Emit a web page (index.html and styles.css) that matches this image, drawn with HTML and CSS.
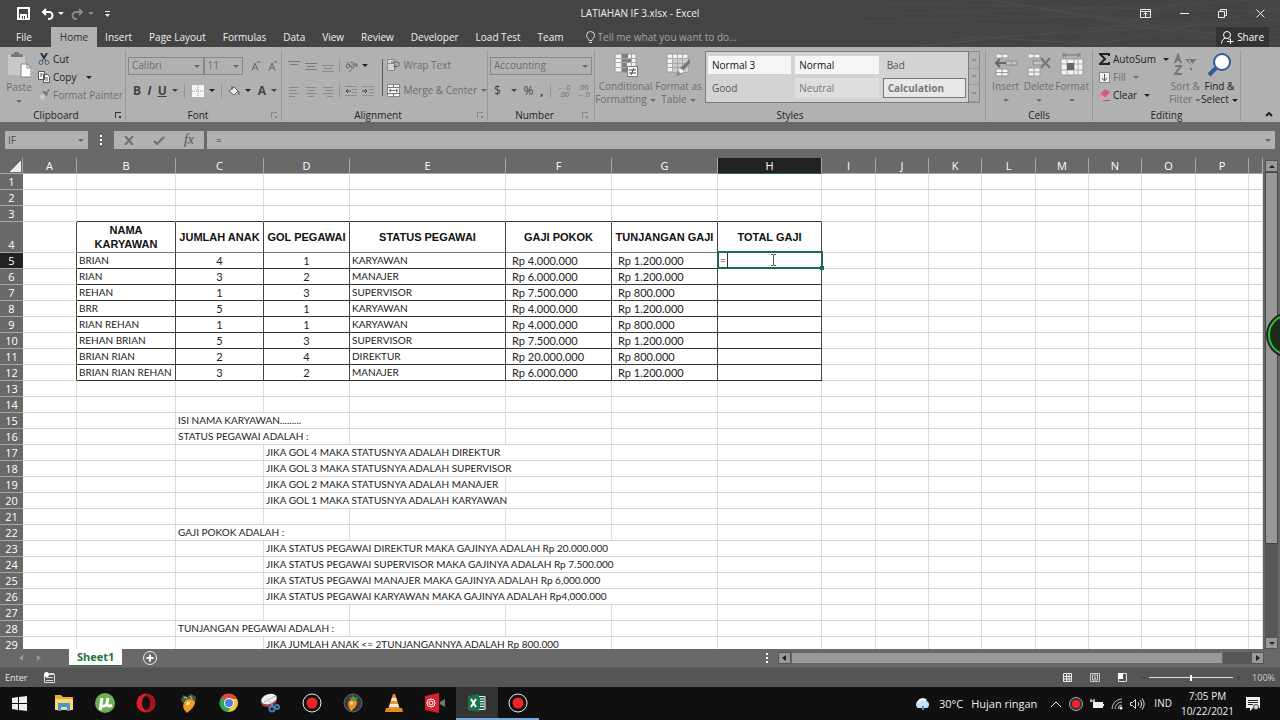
FILE: index.html
```html
<!DOCTYPE html>
<html lang="id">
<head>
    <meta charset="UTF-8">
    <meta name="viewport" content="width=device-width, initial-scale=1.0">
    <title>LATIAHAN IF 3.xlsx - Excel</title>
    <link rel="stylesheet" href="styles.css">
</head>
<body>
    <header class="window-top">
        <svg class="texture" viewBox="0 0 420 47" preserveAspectRatio="none" aria-hidden="true">
            <path d="M20 3 L420 12 M40 14 L300 6 L420 -2 M0 22 L220 16 L420 30 M90 40 L420 20 M130 0 L420 44 M60 46 L260 26 L420 38 M200 47 L330 0 M100 36 L240 44 L420 8 M180 8 L400 47"/>
        </svg>
        <div class="titlebar">
            <div class="quick-access">
                <button aria-label="Save"><svg width="13" height="13" viewBox="0 0 13 13"><path d="M1 1h11v11H1z" fill="none" stroke="#fff" stroke-width="2"/><path d="M3 7h7v5H3z" fill="#fff"/><path d="M5 9h1v3H5zM7 9h1v3H7z" fill="#444"/></svg></button>
                <button aria-label="Undo" class="undo"><svg width="13" height="12" viewBox="0 0 13 12"><path d="M2 4h6a3.500 3.500 0 0 1 0 7H7M5 1L2 4l3 3" fill="none" stroke="#fff" stroke-width="2"/></svg><i class="arrow"></i></button>
                <button aria-label="Redo" class="redo"><svg width="13" height="12" viewBox="0 0 13 12"><path d="M11 4H5a3.500 3.500 0 0 0 0 7h1M8 1l3 3-3 3" fill="none" stroke="#888" stroke-width="2"/></svg><i class="arrow"></i></button>
                <button aria-label="Customize" class="customize"><svg width="5" height="6" viewBox="0 0 5 6"><path d="M0 .5h5" stroke="#eee"/><path d="M0 3h5L2.500 6z" fill="#eee"/></svg></button>
            </div>
            <h1>LATIAHAN IF 3.xlsx - Excel</h1>
            <div class="window-buttons">
                <button aria-label="Ribbon display"><svg width="11" height="9" viewBox="0 0 11 9"><path d="M.5.5h10v8H.5zM.5 2.500h10M5.500 8V4M3.500 5.500l2-2 2 2" fill="none" stroke="#eee"/></svg></button>
                <button aria-label="Minimize"><svg width="9" height="9" viewBox="0 0 9 9"><path d="M0 4.500h9" stroke="#eee"/></svg></button>
                <button aria-label="Restore"><svg width="9" height="9" viewBox="0 0 9 9"><path d="M.5 2.500h6v6h-6zM2.500 2V.5h6v6H7" fill="none" stroke="#eee"/></svg></button>
                <button aria-label="Close"><svg width="9" height="9" viewBox="0 0 9 9"><path d="M.5.5l8 8M8.500.5l-8 8" stroke="#eee"/></svg></button>
            </div>
        </div>
        <nav class="tabs">
            <a href="#" class="file">File</a>
            <a href="#" class="current">Home</a>
            <a href="#">Insert</a>
            <a href="#">Page Layout</a>
            <a href="#">Formulas</a>
            <a href="#">Data</a>
            <a href="#">View</a>
            <a href="#">Review</a>
            <a href="#">Developer</a>
            <a href="#">Load Test</a>
            <a href="#">Team</a>
            <label class="tell-me">
                <svg width="9" height="13" viewBox="0 0 9 13"><path d="M3 9.500c0-2-2.500-2.500-2.500-5a4 4 0 0 1 8 0c0 2.500-2.500 3-2.500 5zM3 11.500h3" fill="none" stroke="#ddd"/></svg>
                <input type="text" aria-label="Tell me" placeholder="Tell me what you want to do...">
            </label>
            <button class="share"><svg width="13" height="13" viewBox="0 0 13 13"><circle cx="6" cy="4" r="3.500" fill="none" stroke="#fff"/><path d="M.5 12.500c0-3 2-5 4-5.500M7 7.500l1.500 1M6 10.500h6.500M9.500 7.500v5.500" fill="none" stroke="#fff"/></svg>Share</button>
        </nav>
    </header>

    <section class="ribbon">
        <div class="group clipboard launches">
            <div class="tools">
                <button class="big paste off">
                    <svg width="24" height="26" viewBox="0 0 24 26"><path d="M1 3h17v20H1z" fill="#c9c9c9"/><path d="M4 2h3V0h5v2h4v3H4z" fill="#777"/><path d="M14 12h6l4 4v9H14z" fill="#fff" stroke="#888"/><path d="M20 12v4h4" fill="none" stroke="#888"/></svg>
                    Paste<i class="arrow"></i>
                </button>
                <div class="stack">
                    <button><svg width="12" height="12" viewBox="0 0 12 12"><path d="M3 0l5 8M9 0L4 8" stroke="#333"/><path d="M3 0l3 5M9 0L6 5" stroke="#333" stroke-width="2"/><circle cx="3" cy="9.500" r="2" fill="none" stroke="#40668c"/><circle cx="9" cy="9.500" r="2" fill="none" stroke="#40668c"/></svg>Cut</button>
                    <button><svg width="12" height="12" viewBox="0 0 12 12"><path d="M.5.5h6v8h-6zM5.500 3.500h4l2 2v6h-6z" fill="#fff" stroke="#555"/><path d="M2 3h3M2 5h2M7 7h3M7 9h3" stroke="#555"/></svg>Copy<i class="arrow spaced"></i></button>
                    <button class="off"><svg width="12" height="12" viewBox="0 0 12 12"><path d="M1 7l4-2 2 3-2 4z" fill="#ccc"/><path d="M4 3l5 4 1-2-1-1 3-3-1-1-3 3-2-1z" fill="#777"/></svg>Format Painter</button>
                </div>
            </div>
            <div class="caption">Clipboard<i class="launcher dark"></i></div>
        </div>

        <div class="group font launches">
            <div class="tools two-rows">
                <div class="line">
                    <span class="drop font-name"><select aria-label="Font"><option>Calibri</option></select></span><span class="drop font-size"><select aria-label="Font size"><option>11</option></select></span>
                    <button class="grow" aria-label="Increase font size"><svg width="10" height="11" viewBox="0 0 10 11"><path d="M1 10.500L4 3l3 7.500M2 8h4" fill="none" stroke="#666"/><path d="M6 3l1.500-2L9 3" fill="none" stroke="#666"/></svg></button>
                    <button class="shrink" aria-label="Decrease font size"><svg width="10" height="11" viewBox="0 0 10 11"><path d="M1 10.500L4 3l3 7.500M2 8h4" fill="none" stroke="#666"/><path d="M6 1l1.500 2L9 1" fill="none" stroke="#666"/></svg></button>
                </div>
                <div class="line marks">
                    <button class="letter"><b>B</b></button>
                    <button class="letter"><b><em>I</em></b></button>
                    <button class="letter"><b><u>U</u></b><i class="arrow"></i></button>
                    <i class="rule"></i>
                    <button aria-label="Borders"><svg width="12" height="12" viewBox="0 0 12 12"><path d="M0 0h12v12H0z" fill="#f5f5f5"/><path d="M0 6h12M6 0v12" stroke="#999" stroke-dasharray="1 1"/></svg><i class="arrow"></i></button>
                    <i class="rule"></i>
                    <button aria-label="Fill color"><svg width="12" height="12" viewBox="0 0 12 12"><path d="M1 6l5-4 4 4-4 4z" fill="#eee" stroke="#666"/><path d="M4 5V1M9 5l2 2v3" fill="none" stroke="#555"/></svg><i class="arrow"></i></button>
                    <button class="letter"><b>A</b><i class="arrow"></i></button>
                </div>
            </div>
            <div class="caption">Font<i class="launcher"></i></div>
        </div>

        <div class="group alignment launches">
            <div class="tools">
                <div class="two-rows">
                    <div class="line">
                        <button aria-label="Top align"><svg width="12" height="12" viewBox="0 0 12 12"><path d="M0 1.500h12M2 4.500h8" stroke="#777"/></svg></button>
                        <button aria-label="Middle align"><svg width="12" height="12" viewBox="0 0 12 12"><path d="M0 3.500h12M2 6.500h8M0 9.500h12" stroke="#777"/></svg></button>
                        <button aria-label="Bottom align"><svg width="12" height="12" viewBox="0 0 12 12"><path d="M0 5.500h12M2 8.500h8M0 11.500h12" stroke="#8a8a8a"/></svg></button>
                        <i class="rule"></i>
                        <button aria-label="Orientation"><svg width="13" height="12" viewBox="0 0 13 12"><circle cx="3" cy="6" r="2" fill="none" stroke="#666"/><path d="M2 2l5 6M5 3a2 2 0 1 1 1 3M4 12l8-8M12 7V4H9" fill="none" stroke="#666"/></svg><i class="arrow"></i></button>
                    </div>
                    <div class="line">
                        <button aria-label="Align left"><svg width="12" height="12" viewBox="0 0 12 12"><path d="M1 2.500h10M1 5.500h7M1 8.500h10M1 11.500h6" stroke="#8a8a8a"/></svg></button>
                        <button aria-label="Center"><svg width="12" height="12" viewBox="0 0 12 12"><path d="M1 2.500h10M3 5.500h6M1 8.500h10M3 11.500h6" stroke="#8a8a8a"/></svg></button>
                        <button aria-label="Align right"><svg width="12" height="12" viewBox="0 0 12 12"><path d="M1 2.500h10M4 5.500h7M1 8.500h10M5 11.500h6" stroke="#8a8a8a"/></svg></button>
                        <i class="rule"></i>
                        <button aria-label="Decrease indent"><svg width="12" height="12" viewBox="0 0 12 12"><path d="M0 1.500h12M7 4.500h5M7 7.500h5M0 10.500h12" stroke="#8f8f8f"/><path d="M6 6H1M3 4L1 6l2 2" fill="none" stroke="#444"/></svg></button>
                        <button aria-label="Increase indent"><svg width="12" height="12" viewBox="0 0 12 12"><path d="M0 1.500h12M7 4.500h5M7 7.500h5M0 10.500h12" stroke="#8f8f8f"/><path d="M0 6h5M3 4l2 2-2 2" fill="none" stroke="#444"/></svg></button>
                    </div>
                </div>
                <i class="rule tall"></i>
                <div class="two-rows">
                    <div class="line"><button class="off"><svg width="13" height="13" viewBox="0 0 13 13"><path d="M.5.5h7v11h-7zM.5 4.500h7" fill="#d5d5d5" stroke="#888"/><path d="M4 3h6a2 2 0 0 1 0 4.500H7M9 5.500l-2 2 2 2" fill="none" stroke="#666"/></svg>Wrap Text</button></div>
                    <div class="line"><button class="off"><svg width="13" height="13" viewBox="0 0 13 13"><path d="M.5.500h12v12H.5z" fill="#f5f5f5" stroke="#888"/><path d="M0 3.500h13M0 9.500h13M6.500 0v3M6.500 10v3M2 6.500h9M4 5L2 6.500 4 8M9 5l2 1.500L9 8" fill="none" stroke="#777"/></svg>Merge &amp; Center<i class="arrow"></i></button></div>
                </div>
            </div>
            <div class="caption">Alignment<i class="launcher"></i></div>
        </div>

        <div class="group number launches">
            <div class="tools two-rows">
                <div class="line"><span class="drop format"><select aria-label="Number format"><option>Accounting</option></select></span></div>
                <div class="line">
                    <button class="letter sign">$<i class="arrow spaced"></i></button>
                    <button class="letter sign">%</button>
                    <button class="letter sign"><b>,</b></button>
                    <i class="rule"></i>
                    <button class="decimals off">←.0<br>.00</button>
                    <button class="decimals off">.00<br>→.0</button>
                </div>
            </div>
            <div class="caption">Number<i class="launcher"></i></div>
        </div>

        <div class="group styles">
            <div class="tools">
                <button class="big off">
                    <svg width="24" height="24" viewBox="0 0 24 24"><path d="M1 1h21v18H1z" fill="#f3f3f3" stroke="#999"/><path d="M8 1h6v4H8zM8 5h9v4H8zM8 9h5v5H8zM8 14h7v5H8z" fill="#808080"/><path d="M1 5.500h21M1 9.500h21M1 14.500h21M7.500 1v18M17.500 1v18" stroke="#aaa"/><path d="M13.500 13.500h10v10h-10z" fill="#fff" stroke="#777"/><path d="M15 17h7M15 20h7M20 15l-3 7" stroke="#444"/></svg>
                    <span>Conditional<br>Formatting<i class="arrow"></i></span>
                </button>
                <button class="big off">
                    <svg width="25" height="24" viewBox="0 0 25 24"><path d="M1 1h21v18H1z" fill="#f3f3f3" stroke="#999"/><path d="M6 5h16v14H6z" fill="#ccc"/><path d="M1 5.500h21M1 10.500h21M1 14.500h21M6.500 1v18M11.500 1v18M16.500 1v18" stroke="#aaa"/><path d="M24 6v4l-7 8-3-3z" fill="#777"/><path d="M8 23c4 0 3-6 6-6 4 0 3 6-6 6z" fill="#888"/><circle cx="15" cy="18" r="2" fill="#fff"/></svg>
                    <span>Format as<br>Table<i class="arrow"></i></span>
                </button>
                <div class="gallery">
                    <button class="white">Normal 3</button>
                    <button class="white">Normal</button>
                    <button class="bad">Bad</button>
                    <button class="good">Good</button>
                    <button class="neutral">Neutral</button>
                    <button class="calc">Calculation</button>
                </div>
                <div class="gallery-scroll">
                    <button aria-label="Row up"><i class="arrow up"></i></button>
                    <button aria-label="Row down"><i class="arrow"></i></button>
                    <button aria-label="More"><i class="arrow"></i></button>
                </div>
            </div>
            <div class="caption">Styles</div>
        </div>

        <div class="group cells">
            <div class="tools">
                <button class="big off"><svg width="24" height="24" viewBox="0 0 24 24"><path d="M2 1h12v4H2zM2 16h12v7H2z" fill="#f3f3f3" stroke="#999"/><path d="M12 8h11v4H12z" fill="#c5c5c5" stroke="#888"/><path d="M8 1v4M8 16v7M2 19.500h12M17.500 8v4" stroke="#999"/><path d="M12 10H2M6 6l-4 4 4 4" fill="none" stroke="#666" stroke-width="2"/></svg>Insert<i class="arrow"></i></button>
                <button class="big off"><svg width="24" height="24" viewBox="0 0 24 24"><path d="M1 1h12v4H1zM1 15h12v8H1z" fill="#f3f3f3" stroke="#999"/><path d="M6 8h10v4H6z" fill="#c5c5c5" stroke="#888"/><path d="M7 1v4M7 15v8M1 19h12" stroke="#999"/><path d="M14 5l9 10M23 5l-9 10" stroke="#777" stroke-width="2"/></svg>Delete<i class="arrow"></i></button>
                <button class="big off"><svg width="24" height="24" viewBox="0 0 24 24"><path d="M1 6h22v16H1z" fill="#f3f3f3" stroke="#999"/><path d="M1 11h22M1 17h22M7 6v18M14 6v16M18 6v16" stroke="#aaa"/><path d="M7 10h7v7H7z" fill="#666"/><path d="M3 2h17M3 0v4M20 0v4M6 0L4 2l2 2M17 0l2 2-2 2" fill="none" stroke="#777"/></svg>Format<i class="arrow"></i></button>
            </div>
            <div class="caption">Cells</div>
        </div>

        <div class="group editing">
            <div class="tools">
                <div class="stack">
                    <button><svg width="11" height="12" viewBox="0 0 11 12"><path d="M10 3V1H1l5 5-5 5h9V9" fill="none" stroke="#222" stroke-width="2"/></svg>AutoSum<i class="arrow"></i></button>
                    <button class="off"><svg width="11" height="11" viewBox="0 0 11 11"><path d="M.5.500h10v10H.5z" fill="#eee" stroke="#888"/><path d="M5.500 2v7M3 6l2.500 3L8 6" fill="none" stroke="#555"/></svg>Fill<i class="arrow"></i></button>
                    <button><svg width="11" height="12" viewBox="0 0 11 12"><path d="M0 7l6-7 5 3-6 7H2z" fill="#d35b77"/><path d="M2 5l5 4-2 2H2L0 8z" fill="#e99bad"/><path d="M4 11.500h7" stroke="#777"/></svg>Clear<i class="arrow"></i></button>
                </div>
                <button class="big off"><svg width="24" height="24" viewBox="0 0 24 24"><path d="M2 10l3-8 3 8M3 7h4M2 13h6l-6 8h7" fill="none" stroke="#777" stroke-width="2"/><path d="M12 6h12l-5 5v7l-2-2v-5z" fill="#777"/><path d="M16 7l2 3v5" fill="none" stroke="#ddd"/></svg><span>Sort &amp;<br>Filter<i class="arrow"></i></span></button>
                <button class="big"><svg width="24" height="24" viewBox="0 0 24 24"><path d="M2 22l7-7" stroke="#2e5c92" stroke-width="4"/><circle cx="15" cy="9" r="8" fill="#fff" stroke="#2e5c92" stroke-width="2"/></svg><span>Find &amp;<br>Select<i class="arrow"></i></span></button>
            </div>
            <div class="caption">Editing</div>
        </div>
        <button class="collapse" aria-label="Collapse the ribbon"><svg width="8" height="5" viewBox="0 0 8 5"><path d="M1 4l3-3 3 3" fill="none" stroke="#222" stroke-width="2"/></svg></button>
    </section>

    <section class="formula-row">
        <span class="drop name-box"><input type="text" aria-label="Name box" value="IF"></span>
        <i class="dots"></i>
        <div class="formula-buttons">
            <button aria-label="Cancel"><svg width="10" height="9" viewBox="0 0 10 9"><path d="M1 0l8 9M9 0L1 9" stroke="#707070" stroke-width="2"/></svg></button>
            <button aria-label="Enter"><svg width="12" height="9" viewBox="0 0 12 9"><path d="M1 5l3 3 7-7" fill="none" stroke="#707070" stroke-width="2"/></svg></button>
            <button class="fx" aria-label="Insert function">fx</button>
        </div>
        <span class="drop formula"><input type="text" aria-label="Formula bar" value="="></span>
    </section>

    <main class="workbook">
        <div class="sheet">
            <table>
                <colgroup>
                    <col class="w-head"><col class="w54"><col class="w-b"><col class="w-c"><col class="w-d"><col class="w-e"><col class="w-f"><col class="w-f"><col class="w-h">
                    <col class="w54"><col class="w53"><col class="w53"><col class="w54"><col class="w53"><col class="w53"><col class="w54"><col class="w53"><col>
                </colgroup>
                <thead>
                    <tr><th class="corner"></th><th>A</th><th>B</th><th>C</th><th>D</th><th>E</th><th>F</th><th>G</th><th class="picked">H</th><th>I</th><th>J</th><th>K</th><th>L</th><th>M</th><th>N</th><th>O</th><th>P</th><th></th></tr>
                </thead>
                <tbody id="rows"></tbody>
            </table>
        </div>
        <div class="vscroll">
            <button aria-label="Scroll up"><i class="arrow up"></i></button>
            <div class="track"><div class="thumb"></div></div>
            <button aria-label="Scroll down"><i class="arrow"></i></button>
        </div>
    </main>

    <section class="sheet-bar">
        <button class="step" aria-label="Previous sheet"><i class="arrow left"></i></button>
        <button class="step" aria-label="Next sheet"><i class="arrow right"></i></button>
        <a href="#" class="sheet-tab">Sheet1</a>
        <button class="add" aria-label="New sheet"><svg width="14" height="14" viewBox="0 0 14 14"><circle cx="7" cy="7" r="6.500" fill="none" stroke="#eee"/><path d="M7 3.500v7M3.500 7h7" stroke="#fff" stroke-width="2"/></svg></button>
        <i class="dots"></i>
        <div class="hscroll">
            <button aria-label="Scroll left"><i class="arrow left"></i></button>
            <div class="track"><div class="thumb"></div></div>
            <button aria-label="Scroll right"><i class="arrow right"></i></button>
        </div>
    </section>

    <footer class="status">
        <span>Enter</span>
        <svg width="11" height="11" viewBox="0 0 11 11"><path d="M.5 2.500h10v8H.5zM2 5.500h7M2 8.500h7M5 1.500h5" fill="none" stroke="#ddd"/><circle cx="2.500" cy="2.500" r="2.500" fill="#fff"/></svg>
        <div class="views">
            <button aria-label="Normal view"><svg width="9" height="9" viewBox="0 0 9 9"><path d="M.5.500h8v8h-8zM3.500 0v9M6 0v9M0 3.500h9M0 6h9" fill="none" stroke="#eee"/></svg></button>
            <button aria-label="Page layout"><svg width="10" height="9" viewBox="0 0 10 9"><path d="M.5.500h9v8h-9zM2.500 2h5v5h-5zM4 4h2M4 5.500h2" fill="none" stroke="#ccc"/></svg></button>
            <button aria-label="Page break"><svg width="9" height="9" viewBox="0 0 9 9"><path d="M.5.500h8v8h-8z" fill="none" stroke="#ddd"/><path d="M0 0h5v6H0z" fill="#fff"/></svg></button>
        </div>
        <label class="zoom"><span>−</span><input type="range" aria-label="Zoom" min="0" max="200" value="100"><span>+</span></label>
        <span class="percent">100%</span>
    </footer>

    <nav class="taskbar">
        <button class="start" aria-label="Start"><svg width="15" height="15" viewBox="0 0 15 15"><path d="M0 2l6-1v6H0zM7 1l8-1v7H7zM0 8h6v6l-6-1zM7 8h8v7l-8-1z" fill="#eee"/></svg></button>
        <div class="apps">
            <button aria-label="File Explorer"><svg width="20" height="18" viewBox="0 0 20 18"><path d="M1 1h6l2 2h10v13H1z" fill="#e5ae40"/><path d="M1 5h18v11H1z" fill="#f9d774"/><path d="M4 17V9h12v8h-3v-4H7v4z" fill="#4a95ca"/></svg></button>
            <button aria-label="uTorrent"><svg width="20" height="20" viewBox="0 0 20 20"><circle cx="10" cy="10" r="10" fill="#6fae55"/><path d="M7 5l-2 12M6 11c0 3 5 3 6-1l1-5M12 10c0 3 2 4 5 2" fill="none" stroke="#fff" stroke-width="3"/></svg></button>
            <button aria-label="Opera"><svg width="20" height="20" viewBox="0 0 20 20"><circle cx="10" cy="10" r="9.500" fill="#d81f2a"/><path d="M10 1a9 9 0 0 1 0 18" fill="#a90f20"/><ellipse cx="10" cy="10" rx="4" ry="7" fill="#101010"/></svg></button>
            <button aria-label="FL Studio"><svg width="18" height="20" viewBox="0 0 18 20"><path d="M2 7l2-5 4 2 4-3 5 3-1 5-6 2-6-1z" fill="#4b5e45"/><path d="M5 4l3 1M11 3l2 3" stroke="#c5d4b5"/><path d="M5 10c2-5 8-5 11-1 0 4-4 8-8 11-3-3-5-6-3-10z" fill="#f39b24"/><path d="M7 11c1-3 4-3 4-1s-3 4-4 1z" fill="#ffe2a0"/></svg></button>
            <button aria-label="Chrome"><svg width="20" height="20" viewBox="0 0 20 20"><circle cx="10" cy="10" r="9" fill="#f3c737"/><path d="M10 10L2 5a9 9 0 0 1 16 1h-8z" fill="#dc4b3e"/><path d="M10 10L2 5a9 9 0 0 0 7 14l4-7z" fill="#38a05a"/><circle cx="10" cy="10" r="5" fill="#fff"/><circle cx="10" cy="10" r="4" fill="#4a83d9"/></svg></button>
            <button aria-label="Snipping Tool"><svg width="20" height="20" viewBox="0 0 20 20"><ellipse cx="9" cy="8" rx="8" ry="6" fill="#a33c4c" transform="rotate(-18 9 8)"/><ellipse cx="9" cy="6" rx="8" ry="5" fill="#eee" transform="rotate(-18 9 6)"/><path d="M4 9l12-6M9 8l4 5" stroke="#aaa"/><circle cx="12" cy="16" r="2.500" fill="none" stroke="#3d83b5" stroke-width="2"/><circle cx="17" cy="14" r="2" fill="none" stroke="#3d83b5" stroke-width="2"/></svg></button>
            <button aria-label="Recorder"><svg width="20" height="20" viewBox="0 0 20 20"><circle cx="10" cy="10" r="9" fill="#111" stroke="#eee"/><circle cx="10" cy="10" r="5.500" fill="#ee2525"/></svg></button>
            <button aria-label="FL Studio 2"><svg width="20" height="20" viewBox="0 0 20 20"><circle cx="10" cy="10" r="9" fill="#363b3b" stroke="#667"/><path d="M6 8c3-3 7-2 8 1 0 4-3 7-6 9-2-2-4-7-2-10z" fill="#f08f24"/><path d="M7 10c1-2 3-2 3 0s-2 3-3 0z" fill="#ffd98a"/><path d="M9 8L6 4l3 1 1-3 2 3 3-1-2 4z" fill="#5c9c40"/></svg></button>
            <button aria-label="VLC"><svg width="18" height="20" viewBox="0 0 18 20"><path d="M1 15h16l1 4H0z" fill="#e58a1f"/><path d="M8 1h2l5 15H3z" fill="#f09028"/><path d="M7 5h4l1 3H6zM5 11h8l1 3H4z" fill="#eee"/></svg></button>
            <button aria-label="Media"><svg width="21" height="20" viewBox="0 0 21 20"><path d="M0 3l14-3v20L0 17z" fill="#d9222d"/><circle cx="6" cy="10" r="4" fill="none" stroke="#fff"/><circle cx="6" cy="10" r="2" fill="none" stroke="#fff"/><path d="M15 9l5-3v8l-5-3z" fill="#777"/></svg></button>
            <button aria-label="Excel" class="open active"><svg width="18" height="18" viewBox="0 0 18 18"><path d="M10 2.500h7v13h-7z" fill="#1f7247" stroke="#e5eee8"/><path d="M12 5h4M12 7.500h4M12 10h4M12 12.500h4" stroke="#fff"/><path d="M0 2l11-2v18L0 16z" fill="#1f7247"/><path d="M3 5l5 8M8 5l-5 8" stroke="#fff" stroke-width="2"/></svg></button>
            <button aria-label="Screen recorder" class="open"><svg width="20" height="20" viewBox="0 0 20 20"><circle cx="10" cy="10" r="9" fill="#111" stroke="#eee"/><circle cx="10" cy="10" r="5.500" fill="#ee2525"/></svg></button>
        </div>
        <div class="tray">
            <a href="#" class="weather"><svg width="17" height="14" viewBox="0 0 17 14"><path d="M4 11a4 4 0 0 1 0-7 5 5 0 0 1 9 0 4 4 0 0 1 0 7z" fill="#c4def2"/><path d="M4 6a5 4 0 0 1 8-3" fill="none" stroke="#fff" stroke-width="2"/><path d="M9 9v4" stroke="#4a94cf" stroke-width="2"/></svg><span>30°C</span><span>Hujan ringan</span></a>
            <svg width="12" height="8" viewBox="0 0 12 8"><path d="M1 7l5-5 5 5" fill="none" stroke="#eee"/></svg>
            <svg width="14" height="14" viewBox="0 0 14 14"><circle cx="7" cy="7" r="6.500" fill="#333" stroke="#aaa"/><circle cx="7" cy="7" r="4" fill="#ef2430"/></svg>
            <svg width="14" height="11" viewBox="0 0 14 11"><path d="M3 4h10v6H3z" fill="#eee"/><path d="M0 3h5M1 1v3M4 1v3M13.500 6v2" stroke="#eee"/></svg>
            <svg width="12" height="12" viewBox="0 0 12 12"><path d="M1 11A10 10 0 0 1 11 1M4 11a7 7 0 0 1 7-7M7 11a4 4 0 0 1 4-4" fill="none" stroke="#bbb"/><circle cx="10" cy="10" r="1.500" fill="#fff"/></svg>
            <svg width="15" height="12" viewBox="0 0 15 12"><path d="M.5 4.500h2l3-3v9l-3-3h-2zM8 4a3 3 0 0 1 0 4M10 2a6 6 0 0 1 0 8M12 .5a9 9 0 0 1 0 11" fill="none" stroke="#ddd"/></svg>
            <span class="lang">IND</span>
            <time>7:05 PM<br>10/22/2021</time>
            <button class="notes" aria-label="Notifications"><svg width="14" height="14" viewBox="0 0 14 14"><path d="M0 0h14v11H7l-3 3v-3H0z" fill="#eee"/><path d="M2 3.500h10M2 5.500h10M2 7.500h5" stroke="#222"/><circle cx="10" cy="10" r="2.500" fill="#ddd" stroke="#444"/></svg></button>
        </div>
    </nav>

    <button class="bubble" aria-label="Recorder panel"></button>
    <script src="script.js"></script>
</body>
</html>
```

FILE: styles.css
```css
* {
    box-sizing: border-box;
}
html, body {
    height: 100%;
    margin: 0;
}
body {
    display: flex;
    flex-direction: column;
    overflow: hidden;
    position: relative;
    background: #696969;
    font-family: "Open Sans", "Noto Sans", sans-serif;
    font-size: 10px;
    line-height: 13px;
    color: #222;
}
button, input, select {
    font: inherit;
    color: inherit;
    background: none;
    border: 0;
    border-radius: 0;
    margin: 0;
    padding: 0;
    outline: none;
}
button {
    display: flex;
    align-items: center;
    justify-content: center;
    white-space: nowrap;
}
a {
    color: inherit;
    text-decoration: none;
}
svg {
    display: block;
    flex: none;
}

/* Small shared marks */
.arrow {
    display: inline-block;
    flex: none;
    margin-left: 4px;
    vertical-align: middle;
    border: 3px solid transparent;
    border-top-color: currentColor;
    border-bottom: 0;
}
.arrow.up {
    border-top: 0;
    border-bottom: 3px solid currentColor;
}
.arrow.left, .arrow.right {
    border: 4px solid transparent;
}
.arrow.left {
    border-right-color: currentColor;
    border-left: 0;
}
.arrow.right {
    border-left-color: currentColor;
    border-right: 0;
}
.arrow.spaced {
    margin-left: 7px;
}
.rule {
    width: 1px;
    height: 14px;
    background: #969696;
}
.rule.tall {
    height: 37px;
    background: #555;
}
.dots {
    width: 2px;
    height: 10px;
    background: repeating-linear-gradient(#fff 0 2px, transparent 2px 4px);
}
.off {
    color: #6e6e6e;
}

/* Title bar and tabs */
.window-top {
    position: relative;
    background: #444;
    color: #f0f0f0;
}
.texture {
    position: absolute;
    right: 0;
    top: 0;
    width: 33%;
    height: 100%;
    fill: none;
    stroke: #4c4c4c;
}
.titlebar {
    position: relative;
    display: grid;
    grid-template-columns: 1fr auto 1fr;
    align-items: center;
    height: 27px;
}
.titlebar h1 {
    margin: 0;
    font-size: 10px;
    font-weight: normal;
}
.quick-access {
    display: flex;
    align-items: center;
    gap: 7px;
    padding-left: 17px;
}
.quick-access .undo {
    margin-left: 4px;
}
.quick-access .redo {
    color: #888;
}
.quick-access .customize {
    margin-left: 4px;
}
.window-buttons {
    display: flex;
    justify-content: flex-end;
    gap: 29px;
    padding-right: 15px;
}
.tabs {
    position: relative;
    display: flex;
    height: 20px;
    line-height: 20px;
}
.tabs a {
    padding: 0 9px 0 8px;
}
.tabs .file {
    padding: 0 19px 0 16px;
}
.tabs .current {
    padding: 0 9px;
    background: #b1b1b1;
    color: #333;
}
.tell-me {
    display: flex;
    align-items: center;
    flex: 1;
    gap: 3px;
    padding-left: 13px;
}
.tell-me input {
    flex: 1;
}
.tell-me input::placeholder {
    color: #a5a5a5;
    opacity: 1;
}
.share {
    gap: 3px;
    margin-right: 11px;
    padding: 0 5px;
    background: #333;
    color: #fff;
}

/* Ribbon */
.ribbon {
    display: flex;
    height: 75px;
    flex: none;
    background: #b1b1b1;
}
.group {
    display: flex;
    flex-direction: column;
    flex: none;
    margin: 3px 0 1px;
    border-right: 1px solid #989898;
}
.tools {
    display: flex;
    flex: 1;
    align-items: flex-start;
}
.caption {
    position: relative;
    height: 12px;
    line-height: 12px;
    text-align: center;
}
.launches .caption {
    padding-right: 13px;
}
.launcher {
    position: absolute;
    right: 4px;
    top: 3px;
    width: 6px;
    height: 6px;
    border-left: 1px solid #888;
    border-top: 1px solid #888;
    background: linear-gradient(#888, #888) 3px 3px / 2px 2px no-repeat;
}
.launcher.dark {
    border-color: #333;
    background-image: linear-gradient(#333, #333);
}
.big {
    flex-direction: column;
    justify-content: flex-start;
    text-align: center;
    padding-top: 3px;
    gap: 3px;
}
.big .arrow {
    margin-left: 3px;
}
.big > .arrow {
    margin: 3px 0 0;
}
.stack {
    display: flex;
    flex-direction: column;
    align-items: flex-start;
}
.stack button {
    height: 18px;
    gap: 3px;
}
.two-rows {
    display: flex;
    flex-direction: column;
    align-items: stretch;
    gap: 6px;
    padding-top: 6px;
}
.line {
    display: flex;
    align-items: center;
    height: 19px;
}
.line button {
    gap: 3px;
}
.letter {
    color: #444;
    font-size: 12px;
}
.drop {
    position: relative;
    display: flex;
    height: 18px;
    color: #6e6e6e;
}
.drop select, .drop input {
    width: 100%;
    appearance: none;
    padding: 0 3px;
}
.drop select {
    border: 1px solid #888;
}
.drop::after {
    content: "";
    position: absolute;
    right: 4px;
    top: 8px;
    border: 3px solid transparent;
    border-top-color: #6a6a6a;
    border-bottom: 0;
}
.clipboard {
    width: 126px;
}
.paste {
    width: 38px;
    padding-top: 2px;
}
.font {
    width: 156px;
    padding-left: 2px;
}
.font-name {
    width: 76px;
}
.font-size {
    width: 40px;
}
.grow, .shrink {
    width: 17px;
}
.grow {
    margin-left: 4px;
}
.marks {
    justify-content: space-between;
    padding: 0 4px 0 5px;
}
.marks .arrow {
    margin-left: 2px;
}
.alignment {
    width: 206px;
}
.alignment .tools {
    gap: 5px;
    padding-left: 6px;
}
.alignment .rule.tall {
    margin-top: 9px;
}
.alignment .two-rows:first-child {
    width: 94px;
}
.alignment .line {
    gap: 5px;
}
.alignment .arrow {
    margin-left: 1px;
}
.number {
    width: 107px;
    padding: 0 2px;
}
.format {
    width: 102px;
}
.number .line:last-child {
    justify-content: space-between;
    padding: 0 2px 0 4px;
}
.decimals {
    font-size: 7px;
    line-height: 7px;
}
.styles {
    flex: 1;
}
.styles .tools {
    padding-left: 4px;
}
.styles .big {
    width: 53px;
}
.gallery {
    display: grid;
    flex: 1;
    grid-template-columns: repeat(3, 1fr);
    gap: 4px;
    height: 52px;
    margin-top: 1px;
    padding: 4px 2px;
    background: #d3d3d3;
    border: 1px solid #7c7c7c;
}
.gallery button {
    justify-content: flex-start;
    padding-left: 4px;
    color: #555;
}
.gallery .white {
    background: #f6f6f6;
    color: #111;
}
.gallery .neutral {
    background: #dedede;
    color: #777;
}
.gallery .calc {
    border: 1px solid #777;
    background: #e8e8e8;
    font-weight: bold;
    color: #777;
}
.gallery-scroll {
    display: flex;
    flex-direction: column;
    width: 11px;
    height: 52px;
    margin: 1px 5px 0 0;
    border: 1px solid #8c8c8c;
    border-left: 0;
    color: #909090;
}
.gallery-scroll button {
    flex: 1;
    border-bottom: 1px solid #999;
}
.gallery-scroll .arrow {
    margin: 0;
}
.cells {
    width: 107px;
}
.cells .tools {
    padding: 0 3px;
}
.cells .big {
    flex: 1;
}
.editing {
    width: 148px;
}
.editing .tools {
    justify-content: space-between;
    padding: 0 6px;
}
.editing .stack {
    flex: 1;
}
.editing .big {
    width: 36px;
}
.collapse {
    width: 39px;
    align-items: flex-end;
    justify-content: flex-end;
    padding: 0 7px 5px 0;
}

/* Formula bar */
.formula-row {
    display: flex;
    align-items: center;
    flex: none;
    height: 36px;
    padding: 0 5px;
}
.name-box {
    width: 83px;
    background: #b1b1b1;
}
.name-box input {
    color: #505050;
}
.formula-row .dots {
    margin: 0 12px;
}
.formula-buttons {
    display: flex;
    width: 90px;
    height: 18px;
    margin-right: 3px;
    background: #b1b1b1;
}
.formula-buttons button {
    flex: 1;
}
.formula-buttons .fx {
    color: #555;
    font: italic 14px "Liberation Serif", serif;
}
.formula {
    flex: 1;
    background: #b1b1b1;
}
.formula input {
    padding-left: 9px;
    color: #333;
}

/* Grid */
.workbook {
    display: flex;
    flex: 1;
    min-height: 0;
}
.sheet {
    flex: 1;
    min-width: 0;
    overflow: hidden;
    background: #fff;
}
table {
    width: 100%;
    table-layout: fixed;
    border-spacing: 0;
    font-family: Lato, sans-serif;
    font-size: 10px;
    line-height: 15px;
    color: #222;
}
.w-head { width: 23px; }
.w53 { width: 53px; }
.w54 { width: 54px; }
.w-b { width: 99px; }
.w-c { width: 88px; }
.w-d { width: 86px; }
.w-e { width: 156px; }
.w-f { width: 106px; }
.w-h { width: 104px; }
th, td {
    height: 16px;
    padding: 0 2px;
    border-right: 1px solid #dcdcdc;
    border-bottom: 1px solid #d4d4d4;
    text-align: left;
    white-space: nowrap;
}
th {
    padding: 0;
    background: #696969;
    border-color: #a8a8a8;
    color: #fff;
    font-family: "Open Sans", sans-serif;
    font-size: 11px;
    font-weight: normal;
    text-align: center;
}
.corner {
    background: linear-gradient(135deg, transparent 50%, #eee 50%) 10px 3px / 11px 11px no-repeat #696969;
}
tbody th {
    border-right: 0;
    vertical-align: bottom;
}
th.picked {
    background: #222;
}
thead .picked {
    border-bottom-color: #217346;
}
.edge-right {
    border-right-color: #444;
}
.edge-bottom {
    border-bottom-color: #333;
}
.boxed {
    border-right-color: #444;
    border-bottom-color: #333;
}
.heading td {
    height: 31px;
}
.heading .boxed {
    padding: 0;
    border-bottom-color: #777;
    color: #111;
    font-family: "Liberation Sans", Arial, sans-serif;
    font-size: 11px;
    font-weight: bold;
    line-height: 14px;
    text-align: center;
    white-space: normal;
}
.center {
    font-size: 11px;
    text-align: center;
}
.money {
    padding-left: 6px;
    font-size: 11px;
}
.editing-cell {
    position: relative;
    padding: 0;
}
.cell-editor {
    position: absolute;
    left: -1px;
    top: -2px;
    right: -2px;
    bottom: -1px;
    display: flex;
    align-items: center;
    border: 2px solid #1e6b45;
    background: #fff;
}
.cell-editor input {
    width: 8px;
    margin-left: 1px;
    border-right: 1px solid #333;
}
.cell-editor::after {
    content: "";
    position: absolute;
    right: -3px;
    bottom: -3px;
    width: 4px;
    height: 4px;
    background: #1e6b45;
}
.pointer {
    position: absolute;
    left: 50%;
    top: 1px;
}

/* Scroll bars */
.vscroll {
    display: flex;
    flex-direction: column;
    width: 17px;
    padding: 2px 2px 0;
}
.vscroll button, .hscroll button {
    width: 13px;
    height: 12px;
    background: #999;
    border: 1px solid #555;
    color: #222;
}
.vscroll .arrow, .hscroll .arrow {
    margin: 0;
}
.hscroll .arrow {
    border-top-width: 3px;
    border-bottom-width: 3px;
}
.track {
    flex: 1;
    background: #575757;
}
.vscroll .thumb {
    height: 80%;
    background: #999;
    border: 1px solid #444;
}
.sheet-bar {
    display: flex;
    align-items: center;
    flex: none;
    height: 19px;
    padding: 0 16px 0 17px;
    border-bottom: 1px solid #5e5e5e;
}
.step {
    width: 8px;
    margin-right: 10px;
    color: #999;
}
.step .arrow {
    margin: 0;
    border-top-width: 3px;
    border-bottom-width: 3px;
}
.sheet-tab {
    align-self: flex-start;
    height: 17px;
    margin-left: 16px;
    padding: 0 8px;
    background: #fff;
    border-bottom: 1px solid #217346;
    color: #217346;
    font-size: 11px;
    font-weight: bold;
    line-height: 15px;
}
.add {
    margin: 0 auto 0 21px;
}
.hscroll {
    display: flex;
    width: 39%;
    margin-left: 10px;
}
.hscroll .thumb {
    width: 94%;
    height: 12px;
    background: #999;
    border: 1px solid #666;
}

/* Status bar */
.status {
    display: flex;
    align-items: center;
    flex: none;
    gap: 17px;
    height: 19px;
    padding: 0 5px;
    background: #555;
    color: #e5e5e5;
    font-size: 9px;
}
.views {
    display: flex;
    gap: 18px;
    margin-left: auto;
    margin-right: -3px;
}
.zoom {
    display: flex;
    align-items: center;
    gap: 3px;
    color: #333;
}
.zoom input {
    width: 84px;
    height: 9px;
    appearance: none;
    background: linear-gradient(#ddd, #ddd) center / 100% 1px no-repeat;
}
.zoom input::-webkit-slider-thumb {
    appearance: none;
    width: 2px;
    height: 6px;
    background: #fff;
}
.percent {
    margin-left: -6px;
    color: #ccc;
}

/* Taskbar */
.taskbar {
    display: flex;
    flex: none;
    height: 33px;
    background: #101010;
    color: #eee;
}
.start {
    width: 43px;
    padding-right: 4px;
}
.apps {
    display: flex;
    width: 496px;
}
.apps button {
    flex: 1;
    border-bottom: 2px solid transparent;
}
.apps .open {
    border-bottom-color: #76a9dc;
}
.apps .active {
    background: #333;
}
.tray {
    display: flex;
    align-items: center;
    gap: 7px;
    margin-left: auto;
    padding-right: 20px;
}
.weather {
    display: flex;
    align-items: center;
    gap: 8px;
    margin-right: 6px;
    font-size: 11px;
}
.lang {
    margin-left: 2px;
}
.tray time {
    margin-left: 2px;
    line-height: 15px;
    text-align: center;
}
.notes {
    margin-left: 5px;
}
.bubble {
    position: absolute;
    right: -30px;
    top: 314px;
    width: 42px;
    height: 42px;
    border: 2px solid #35b53a;
    border-radius: 50%;
    background: #1c2b1c;
    box-shadow: 0 0 0 2px #222;
}
```

FILE: script.js
```js
// Sheet contents
const headings = ["NAMA KARYAWAN", "JUMLAH ANAK", "GOL PEGAWAI", "STATUS PEGAWAI", "GAJI POKOK", "TUNJANGAN GAJI", "TOTAL GAJI"];

const employees = [
    ["BRIAN", 4, 1, "KARYAWAN", "Rp 4.000.000", "Rp 1.200.000"],
    ["RIAN", 3, 2, "MANAJER", "Rp 6.000.000", "Rp 1.200.000"],
    ["REHAN", 1, 3, "SUPERVISOR", "Rp 7.500.000", "Rp 800.000"],
    ["BRR", 5, 1, "KARYAWAN", "Rp 4.000.000", "Rp 1.200.000"],
    ["RIAN REHAN", 1, 1, "KARYAWAN", "Rp 4.000.000", "Rp 800.000"],
    ["REHAN BRIAN", 5, 3, "SUPERVISOR", "Rp 7.500.000", "Rp 1.200.000"],
    ["BRIAN RIAN", 2, 4, "DIREKTUR", "Rp 20.000.000", "Rp 800.000"],
    ["BRIAN RIAN REHAN", 3, 2, "MANAJER", "Rp 6.000.000", "Rp 1.200.000"]
];

// row: [first column, columns covered, text]
const notes = {
    15: [3, 2, "ISI NAMA KARYAWAN........."],
    16: [3, 2, "STATUS PEGAWAI ADALAH :"],
    17: [4, 3, "JIKA GOL 4 MAKA STATUSNYA ADALAH DIREKTUR"],
    18: [4, 3, "JIKA GOL 3 MAKA STATUSNYA ADALAH SUPERVISOR"],
    19: [4, 2, "JIKA GOL 2 MAKA STATUSNYA ADALAH MANAJER"],
    20: [4, 3, "JIKA GOL 1 MAKA STATUSNYA ADALAH KARYAWAN"],
    22: [3, 2, "GAJI POKOK ADALAH :"],
    23: [4, 4, "JIKA STATUS PEGAWAI DIREKTUR MAKA GAJINYA ADALAH Rp 20.000.000"],
    24: [4, 4, "JIKA STATUS PEGAWAI SUPERVISOR MAKA GAJINYA ADALAH Rp 7.500.000"],
    25: [4, 4, "JIKA STATUS PEGAWAI MANAJER MAKA GAJINYA ADALAH Rp 6,000.000"],
    26: [4, 4, "JIKA STATUS PEGAWAI KARYAWAN MAKA GAJINYA ADALAH Rp4,000.000"],
    28: [3, 2, "TUNJANGAN PEGAWAI ADALAH :"],
    29: [4, 3, "JIKA JUMLAH ANAK <= 2TUNJANGANNYA ADALAH Rp 800.000"]
};

const editor = `<div class="cell-editor"><input type="text" aria-label="H5" value="=">
    <svg class="pointer" width="7" height="12" viewBox="0 0 7 12"><path d="M1 .5h2l.5 1 .5-1h2M3.500 1v10M1 11.500h2l.5-1 .5 1h2" fill="none" stroke="#555"/></svg></div>`;

const body = document.getElementById("rows");

for (let r = 1; r <= 29; r++) {
    const tr = body.insertRow();
    const th = document.createElement("th");
    th.textContent = r;
    tr.appendChild(th);
    if (r === 4) tr.className = "heading";
    if (r === 5) th.className = "picked";

    for (let c = 1; c <= 17; c++) {
        const td = tr.insertCell();
        const inTable = r >= 4 && r <= 12;

        if (inTable && c >= 2 && c <= 8) {
            td.className = "boxed";
            if (r === 4) {
                td.textContent = headings[c - 2];
            } else {
                td.textContent = employees[r - 5][c - 2] ?? "";
                if (c === 3 || c === 4) td.classList.add("center");
                if (c === 6 || c === 7) td.classList.add("money");
            }
            if (r === 5 && c === 8) {
                td.classList.add("editing-cell");
                td.innerHTML = editor;
            }
        } else if (inTable && c === 1) {
            td.className = "edge-right";
        } else if (r === 3 && c >= 2 && c <= 8) {
            td.className = "edge-bottom";
        } else if (notes[r] && notes[r][0] === c) {
            td.colSpan = notes[r][1];
            td.textContent = notes[r][2];
            c += notes[r][1] - 1;
        }
    }
}
```
